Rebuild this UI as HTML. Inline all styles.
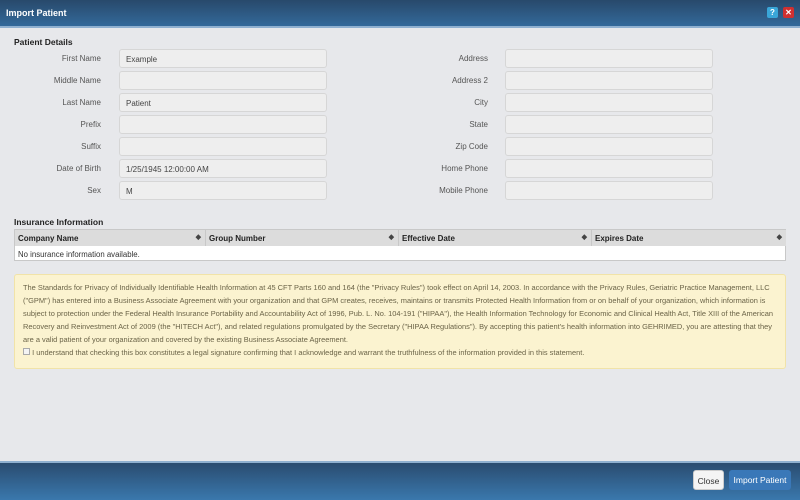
<!DOCTYPE html>
<html><head><style>
*{box-sizing:border-box;margin:0;padding:0}
body{width:800px;height:500px;overflow:hidden;background:#e7e8eb;font-family:"Liberation Sans",sans-serif;color:#333;position:relative}
.hdr{position:absolute;left:0;top:0;width:800px;height:28px;background:linear-gradient(#28496b,#33699a);border-bottom:2px solid #8fb0d0}
.hdr span{position:absolute;left:6px;top:8px;color:#fff;font-weight:bold;font-size:9px}
.ic{position:absolute;top:7px;width:11px;height:11px;border-radius:2px;color:#fff;font-size:8px;font-weight:bold;text-align:center;line-height:11px}
.h2{position:absolute;font-weight:bold;font-size:8.5px;color:#222}
.lbl{position:absolute;font-size:8px;color:#555;text-align:right;width:100px}
.inp{position:absolute;width:208px;height:19px;background:#eeeeee;border:1px solid #d6d6d6;border-radius:3px;font-size:8px;padding:5px 0 0 6px;color:#444}
.tbl{position:absolute;left:14px;top:229px;width:772px;height:32px;border:1px solid #c8c8c8;background:#fff}
.th{position:absolute;top:0;height:16px;background:#dcdcdc;font-size:8px;font-weight:bold;padding:4px 0 0 3px;border-right:1px solid #c8c8c8;color:#222}
.th i{position:absolute;right:4px;top:3px;font-style:normal;font-size:7px;color:#444}
.warn{position:absolute;left:14px;top:274px;width:772px;height:95px;background:#fbf3d0;border:1px solid #f1e3a8;border-radius:3px;font-size:7.45px;color:#6b6448;padding:7px 0 0 8px;line-height:12.9px;white-space:nowrap}
.ftr{position:absolute;left:0;top:461px;width:800px;height:39px;background:linear-gradient(#2a4c70,#3a78ad);border-top:2px solid #8fb0d0}
.btn{position:absolute;top:470px;height:20px;font-size:8.5px;border-radius:3px;text-align:center;line-height:20px}
</style></head><body>
<div class="hdr"><span>Import Patient</span></div>
<div class="ic" style="left:767px;background:#3aa6d8">?</div>
<div class="ic" style="left:783px;background:#d03030">✕</div>
<div class="h2" style="left:14px;top:37px">Patient Details</div>

<div class="lbl" style="left:1px;top:54px">First Name</div><div class="inp" style="left:119px;top:49px">Example</div>
<div class="lbl" style="left:1px;top:76px">Middle Name</div><div class="inp" style="left:119px;top:71px"></div>
<div class="lbl" style="left:1px;top:98px">Last Name</div><div class="inp" style="left:119px;top:93px">Patient</div>
<div class="lbl" style="left:1px;top:120px">Prefix</div><div class="inp" style="left:119px;top:115px"></div>
<div class="lbl" style="left:1px;top:142px">Suffix</div><div class="inp" style="left:119px;top:137px"></div>
<div class="lbl" style="left:1px;top:164px">Date of Birth</div><div class="inp" style="left:119px;top:159px">1/25/1945 12:00:00 AM</div>
<div class="lbl" style="left:1px;top:186px">Sex</div><div class="inp" style="left:119px;top:181px">M</div>

<div class="lbl" style="left:388px;top:54px">Address</div><div class="inp" style="left:505px;top:49px"></div>
<div class="lbl" style="left:388px;top:76px">Address 2</div><div class="inp" style="left:505px;top:71px"></div>
<div class="lbl" style="left:388px;top:98px">City</div><div class="inp" style="left:505px;top:93px"></div>
<div class="lbl" style="left:388px;top:120px">State</div><div class="inp" style="left:505px;top:115px"></div>
<div class="lbl" style="left:388px;top:142px">Zip Code</div><div class="inp" style="left:505px;top:137px"></div>
<div class="lbl" style="left:388px;top:164px">Home Phone</div><div class="inp" style="left:505px;top:159px"></div>
<div class="lbl" style="left:388px;top:186px">Mobile Phone</div><div class="inp" style="left:505px;top:181px"></div>

<div class="h2" style="left:14px;top:217px">Insurance Information</div>
<div class="tbl">
<div class="th" style="left:0;width:191px">Company Name<i>◆</i></div>
<div class="th" style="left:191px;width:193px">Group Number<i>◆</i></div>
<div class="th" style="left:384px;width:193px">Effective Date<i>◆</i></div>
<div class="th" style="left:577px;width:194px;border-right:none">Expires Date<i>◆</i></div>
<div style="position:absolute;left:3px;top:20px;font-size:7.8px;color:#333">No insurance information available.</div>
</div>

<div class="warn">The Standards for Privacy of Individually Identifiable Health Information at 45 CFT Parts 160 and 164 (the "Privacy Rules") took effect on April 14, 2003. In accordance with the Privacy Rules, Geriatric Practice Management, LLC<br>("GPM") has entered into a Business Associate Agreement with your organization and that GPM creates, receives, maintains or transmits Protected Health Information from or on behalf of your organization, which information is<br>subject to protection under the Federal Health Insurance Portability and Accountability Act of 1996, Pub. L. No. 104-191 ("HIPAA"), the Health Information Technology for Economic and Clinical Health Act, Title XIII of the American<br>Recovery and Reinvestment Act of 2009 (the "HITECH Act"), and related regulations promulgated by the Secretary ("HIPAA Regulations"). By accepting this patient's health information into GEHRIMED, you are attesting that they<br>are a valid patient of your organization and covered by the existing Business Associate Agreement.<br><span style="display:inline-block;width:7px;height:7px;border:1px solid #aaa;background:#f4f4f4;vertical-align:0"></span> I understand that checking this box constitutes a legal signature confirming that I acknowledge and warrant the truthfulness of the information provided in this statement.</div>

<div class="ftr"></div>
<div class="btn" style="left:693px;width:31px;background:#f4f4f4;border:1px solid #ccc;color:#333">Close</div>
<div class="btn" style="left:729px;width:62px;background:#3a78b8;color:#fff">Import Patient</div>
</body></html>
